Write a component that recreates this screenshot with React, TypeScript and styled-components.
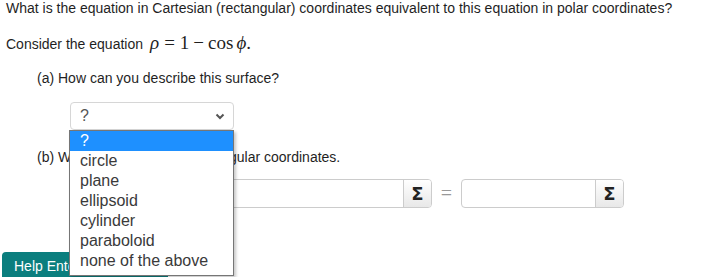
import React from "react";
import styled, { createGlobalStyle } from "styled-components";

const GlobalStyle = createGlobalStyle`
  body {
    margin: 0;
    background: #ffffff;
    font-family: "Liberation Sans", Arial, sans-serif;
    font-size: 14px;
    color: #1f1f1f;
  }
`;

const Page = styled.div`
  width: 708px;
  height: 277px;
  padding: 0 6px;
  box-sizing: border-box;
  overflow: hidden;
`;

const Question = styled.p`
  margin: 0;
  line-height: 17px;
`;

const Para = styled.p`
  margin: 16px 0 0;
  line-height: 20px;
  display: flex;
  align-items: baseline;
`;

const PartLabel = styled.div<{ $top: number }>`
  margin: ${(p) => p.$top}px 0 0 31px;
  line-height: 20px;
`;

const MathSpan = styled.span`
  font-family: "Liberation Serif", "Times New Roman", serif;
  font-size: 19px;
  margin-left: 7px;
  display: inline-flex;
  align-items: baseline;
`;

const Mi = styled.span`
  font-style: italic;
`;

const Mo = styled.span<{ $gap?: number }>`
  margin: 0 ${(p) => p.$gap ?? 0}px;
`;

const SelectWrap = styled.div`
  position: relative;
  margin: 14px 0 0 64px;
  width: 164px;
  height: 28px;
`;

const SelectBox = styled.div`
  height: 28px;
  box-sizing: border-box;
  border: 1px solid #d6d6d6;
  border-radius: 4px;
  background: #fff;
  display: flex;
  align-items: center;
  justify-content: space-between;
  padding: 0 8px 0 9px;
  font-size: 16px;
  color: #555;
`;

const OptionList = styled.ul`
  position: absolute;
  top: 28px;
  left: -1px;
  width: 165px;
  box-sizing: border-box;
  margin: 0;
  padding: 0 0 4px;
  list-style: none;
  background: #fff;
  border: 1px solid #767676;
  box-shadow: 2px 2px 3px rgba(0, 0, 0, 0.22);
  z-index: 5;
`;

const OptionItem = styled.li<{ $active?: boolean }>`
  height: 20px;
  line-height: 20px;
  padding-left: 10px;
  font-size: 16px;
  white-space: nowrap;
  color: ${(p) => (p.$active ? "#fff" : "#3a3a3a")};
  background: ${(p) => (p.$active ? "#1e90ff" : "transparent")};
`;

const AnswerRow = styled.div`
  margin: 12px 0 0 64px;
  display: flex;
  align-items: center;
  height: 29px;
`;

const AnswerField = styled.div<{ $width: number }>`
  width: ${(p) => p.$width}px;
  height: 29px;
  box-sizing: border-box;
  border: 1px solid #cccccc;
  border-radius: 4px;
  display: flex;
  overflow: hidden;
  background: #fff;
`;

const AnswerInput = styled.input`
  flex: 1;
  min-width: 0;
  border: none;
  outline: none;
  padding: 0 6px;
  font-size: 14px;
  background: transparent;
`;

const SigmaButton = styled.button`
  width: 28px;
  flex-shrink: 0;
  border: none;
  border-left: 1px solid #cccccc;
  background: linear-gradient(#ffffff, #e8e8e8);
  padding: 0;
  font-family: "DejaVu Sans", sans-serif;
  font-weight: bold;
  font-size: 18px;
  color: #222;
  cursor: pointer;
`;

const Equals = styled.span`
  width: 29px;
  text-align: center;
  font-family: "Liberation Serif", serif;
  font-size: 20px;
  color: #999;
`;

const HelpButton = styled.button`
  margin: 44px 0 0 -4px;
  height: 32px;
  width: 166px;
  border: none;
  border-radius: 4px 4px 0 0;
  background: #0b7e7e;
  color: #fff;
  font-family: "Liberation Sans", Arial, sans-serif;
  font-size: 14px;
  text-align: left;
  padding: 0 0 4px 12px;
  cursor: pointer;
`;

const options = [
  "?",
  "circle",
  "plane",
  "ellipsoid",
  "cylinder",
  "paraboloid",
  "none of the above",
];

const Chevron = () => (
  <svg width="10" height="7" viewBox="0 0 10 7">
    <path d="M1.5 1.5 L5 5 L8.5 1.5" fill="none" stroke="#555" strokeWidth="2" />
  </svg>
);

const App = () => {
  return (
    <Page>
      <GlobalStyle />
      <Question>
        What is the equation in Cartesian (rectangular) coordinates equivalent
        to this equation in polar coordinates?
      </Question>
      <Para>
        Consider the equation
        <MathSpan>
          <Mi>ρ</Mi>
          <Mo $gap={5}>=</Mo>
          <span>1</span>
          <Mo $gap={4}>−</Mo>
          <span>cos</span>
          <Mi style={{ marginLeft: 3 }}>ϕ</Mi>
          <span>.</span>
        </MathSpan>
      </Para>
      <PartLabel $top={14}>(a) How can you describe this surface?</PartLabel>
      <SelectWrap>
        <SelectBox>
          <span>?</span>
          <Chevron />
        </SelectBox>
        <OptionList>
          {options.map((o, i) => (
            <OptionItem key={o} $active={i === 0}>
              {o}
            </OptionItem>
          ))}
        </OptionList>
      </SelectWrap>
      <PartLabel $top={17}>
        (b) Write the equation in rectangular coordinates.
      </PartLabel>
      <AnswerRow>
        <AnswerField $width={362}>
          <AnswerInput />
          <SigmaButton>Σ</SigmaButton>
        </AnswerField>
        <Equals>=</Equals>
        <AnswerField $width={163}>
          <AnswerInput />
          <SigmaButton>Σ</SigmaButton>
        </AnswerField>
      </AnswerRow>
      <HelpButton>Help Entering Answers</HelpButton>
    </Page>
  );
};

export default App;
